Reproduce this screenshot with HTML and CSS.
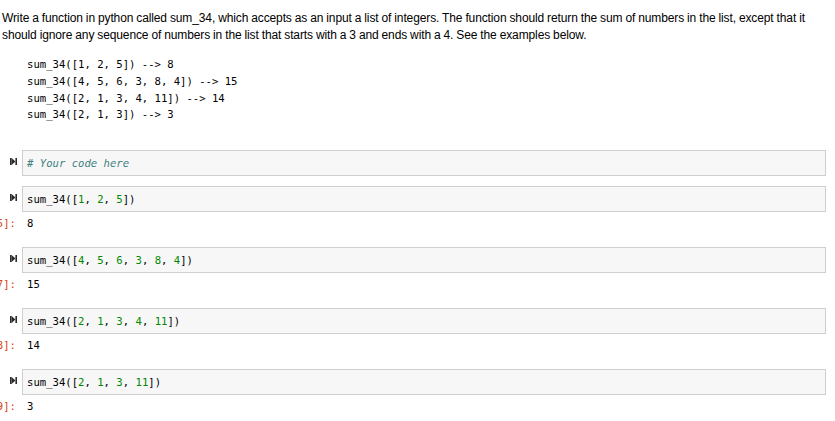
FILE: index.html
```html
<!DOCTYPE html>
<html>
<head>
<meta charset="utf-8">
<link rel="stylesheet" href="styles.css">
</head>
<body>
<div class="desc">
<p class="text">Write a function in python called sum_34, which accepts as an input a list of integers. The function should return the sum of numbers in the list, except that it should ignore any sequence of numbers in the list that starts with a 3 and ends with a 4. See the examples below.</p>
<pre class="examples">sum_34([1, 2, 5]) --&gt; 8
sum_34([4, 5, 6, 3, 8, 4]) --&gt; 15
sum_34([2, 1, 3, 4, 11]) --&gt; 14
sum_34([2, 1, 3]) --&gt; 3</pre>
</div>

<div class="cells">
  <div class="cell">
    <div class="row">
      <div class="prompt"><svg class="run" viewBox="0 0 7 7" width="7" height="7"><rect x="0" y="0" width="1.6" height="7"/><polygon points="1.6,0 5.4,3.5 1.6,7"/><rect x="5.4" y="0" width="1.6" height="7"/></svg></div>
      <div class="input"><span class="c">#&nbsp;Your code here</span></div>
    </div>
  </div>

  <div class="cell">
    <div class="row">
      <div class="prompt"><svg class="run" viewBox="0 0 7 7" width="7" height="7"><rect x="0" y="0" width="1.6" height="7"/><polygon points="1.6,0 5.4,3.5 1.6,7"/><rect x="5.4" y="0" width="1.6" height="7"/></svg></div>
      <div class="input">sum_34([<span class="n">1</span>, <span class="n">2</span>, <span class="n">5</span>])</div>
    </div>
    <div class="row out">
      <div class="prompt oprompt"><span>Out[5]:</span></div>
      <div class="output">8</div>
    </div>
  </div>

  <div class="cell">
    <div class="row">
      <div class="prompt"><svg class="run" viewBox="0 0 7 7" width="7" height="7"><rect x="0" y="0" width="1.6" height="7"/><polygon points="1.6,0 5.4,3.5 1.6,7"/><rect x="5.4" y="0" width="1.6" height="7"/></svg></div>
      <div class="input">sum_34([<span class="n">4</span>, <span class="n">5</span>, <span class="n">6</span>, <span class="n">3</span>, <span class="n">8</span>, <span class="n">4</span>])</div>
    </div>
    <div class="row out">
      <div class="prompt oprompt"><span>Out[7]:</span></div>
      <div class="output">15</div>
    </div>
  </div>

  <div class="cell">
    <div class="row">
      <div class="prompt"><svg class="run" viewBox="0 0 7 7" width="7" height="7"><rect x="0" y="0" width="1.6" height="7"/><polygon points="1.6,0 5.4,3.5 1.6,7"/><rect x="5.4" y="0" width="1.6" height="7"/></svg></div>
      <div class="input">sum_34([<span class="n">2</span>, <span class="n">1</span>, <span class="n">3</span>, <span class="n">4</span>, <span class="n">11</span>])</div>
    </div>
    <div class="row out">
      <div class="prompt oprompt"><span>Out[8]:</span></div>
      <div class="output">14</div>
    </div>
  </div>

  <div class="cell">
    <div class="row">
      <div class="prompt"><svg class="run" viewBox="0 0 7 7" width="7" height="7"><rect x="0" y="0" width="1.6" height="7"/><polygon points="1.6,0 5.4,3.5 1.6,7"/><rect x="5.4" y="0" width="1.6" height="7"/></svg></div>
      <div class="input">sum_34([<span class="n">2</span>, <span class="n">1</span>, <span class="n">3</span>, <span class="n">11</span>])</div>
    </div>
    <div class="row out">
      <div class="prompt oprompt"><span>Out[9]:</span></div>
      <div class="output">3</div>
    </div>
  </div>
</div>
</body>
</html>
```

FILE: styles.css
```css
html, body {
  margin: 0;
  padding: 0;
  background: #fff;
}
body {
  font-family: "Liberation Sans", Arial, sans-serif;
  color: #000;
  overflow: hidden;
}
.desc {
  padding: 10px 0 0 2px;
}
.text {
  margin: 0;
  font-size: 12px;
  line-height: 17px;
  width: 826px;
  letter-spacing: -0.12px;
  word-spacing: -0.2px;
}
.examples {
  margin: 12px 0 0 25px;
  font-family: "DejaVu Sans Mono", monospace;
  font-size: 10.6px;
  line-height: 16.8px;
  color: #000;
}
.cells {
  margin-top: 27px;
  padding-right: 9px;
  display: flex;
  flex-direction: column;
  gap: 10px;
}
.cell {
  display: flex;
  flex-direction: column;
}
.row {
  display: flex;
  align-items: stretch;
}
.prompt {
  width: 22px;
  flex: none;
  display: flex;
  align-items: center;
  justify-content: flex-start;
  padding-left: 10px;
  box-sizing: border-box;
}
.run {
  fill: #2b2b2b;
  margin-top: -3px;
}
.input {
  flex: 1;
  border: 1px solid #cfcfcf;
  background: #f7f7f7;
  padding: 4px 4px;
  font-family: "DejaVu Sans Mono", monospace;
  font-size: 10.6px;
  line-height: 16px;
  color: #000;
  white-space: pre;
}
.c {
  color: #408080;
  font-style: italic;
}
.n {
  color: #080;
}
.out {
  padding: 1px 0 4px;
}
.oprompt {
  width: 16px;
  padding-left: 0;
  justify-content: flex-end;
  overflow: hidden;
  font-family: "DejaVu Sans Mono", monospace;
  font-size: 10.6px;
  line-height: 20px;
  color: #D84315;
  white-space: pre;
  align-items: center;
}
.oprompt span {
  flex: none;
}
.output {
  margin-left: 11px;
  font-family: "DejaVu Sans Mono", monospace;
  font-size: 10.6px;
  line-height: 20px;
  color: #000;
}
```
